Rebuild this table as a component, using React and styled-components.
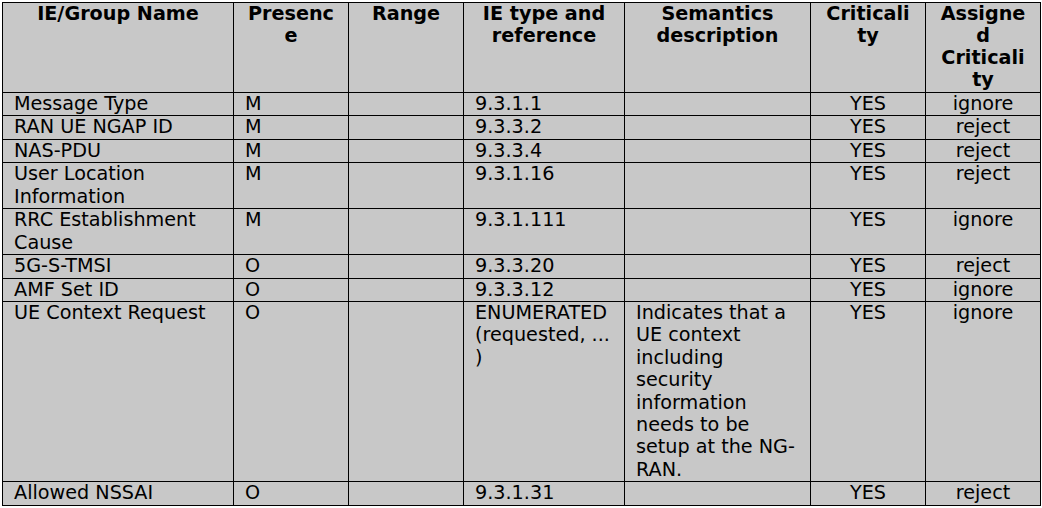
import React from "react";
import styled, { createGlobalStyle } from "styled-components";

const GlobalStyle = createGlobalStyle`
  body {
    margin: 0;
    background: #ffffff;
    font-family: "DejaVu Sans", Verdana, sans-serif;
  }
`;

const Page = styled.div`
  padding: 2px 0 0 2px;
`;

const Table = styled.table`
  border-collapse: collapse;
  table-layout: fixed;
  width: 1038px;
  background: #c8c8c8;
  color: #000000;
  font-size: 19.2px;
  line-height: 22.4px;
`;

const Row = styled.tr`
  height: ${(p) => p.$h}px;
`;

const HeadCell = styled.th`
  border: 1px solid #000000;
  padding: 0 11px;
  vertical-align: top;
  text-align: center;
  font-weight: bold;
  line-height: 22px;
  overflow-wrap: anywhere;
`;

const Cell = styled.td`
  border: 1px solid #000000;
  padding: 0 11px;
  vertical-align: top;
  text-align: ${(p) => (p.$center ? "center" : "left")};
  overflow-wrap: anywhere;
`;

const columns = [
  { title: "IE/Group Name", width: 231 },
  { title: "Presence", width: 115 },
  { title: "Range", width: 115 },
  { title: "IE type and reference", width: 161 },
  { title: "Semantics description", width: 186 },
  { title: "Criticality", width: 115 },
  { title: "Assigned Criticality", width: 115 },
];

const rows = [
  { name: "Message Type", presence: "M", type: "9.3.1.1", crit: "YES", assigned: "ignore", h: 23 },
  { name: "RAN UE NGAP ID", presence: "M", type: "9.3.3.2", crit: "YES", assigned: "reject", h: 23 },
  { name: "NAS-PDU", presence: "M", type: "9.3.3.4", crit: "YES", assigned: "reject", h: 23 },
  { name: "User Location Information", presence: "M", type: "9.3.1.16", crit: "YES", assigned: "reject", h: 46 },
  { name: "RRC Establishment Cause", presence: "M", type: "9.3.1.111", crit: "YES", assigned: "ignore", h: 46 },
  { name: "5G-S-TMSI", presence: "O", type: "9.3.3.20", crit: "YES", assigned: "reject", h: 23 },
  { name: "AMF Set ID", presence: "O", type: "9.3.3.12", crit: "YES", assigned: "ignore", h: 23 },
  {
    name: "UE Context Request",
    presence: "O",
    type: "ENUMERATED (requested, ... )",
    semantics:
      "Indicates that a UE context including security information needs to be setup at the NG-RAN.",
    crit: "YES",
    assigned: "ignore",
    h: 180,
  },
  { name: "Allowed NSSAI", presence: "O", type: "9.3.1.31", crit: "YES", assigned: "reject", h: 23 },
];

export default function App() {
  return (
    <Page>
      <GlobalStyle />
      <Table>
        <colgroup>
          {columns.map((c) => (
            <col key={c.title} style={{ width: c.width }} />
          ))}
        </colgroup>
        <thead>
          <Row $h={90}>
            {columns.map((c) => (
              <HeadCell key={c.title}>{c.title}</HeadCell>
            ))}
          </Row>
        </thead>
        <tbody>
          {rows.map((r) => (
            <Row key={r.name} $h={r.h}>
              <Cell>{r.name}</Cell>
              <Cell>{r.presence}</Cell>
              <Cell></Cell>
              <Cell>{r.type}</Cell>
              <Cell>{r.semantics}</Cell>
              <Cell $center>{r.crit}</Cell>
              <Cell $center>{r.assigned}</Cell>
            </Row>
          ))}
        </tbody>
      </Table>
    </Page>
  );
}
